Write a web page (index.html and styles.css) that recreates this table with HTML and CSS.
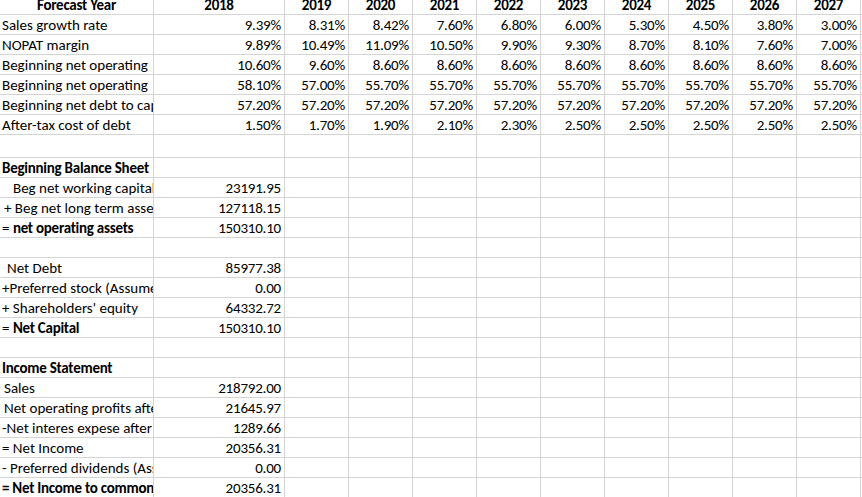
FILE: index.html
```html
<!DOCTYPE html>
<html>
<head>
<meta charset="utf-8">
<link rel="stylesheet" href="styles.css">
</head>
<body>
<div class="sheet">
  <div class="row head">
    <div class="c b ctr">Forecast Year</div><div class="c b ctr">2018</div><div class="c b ctr">2019</div><div class="c b ctr">2020</div><div class="c b ctr">2021</div><div class="c b ctr">2022</div><div class="c b ctr">2023</div><div class="c b ctr">2024</div><div class="c b ctr">2025</div><div class="c b ctr">2026</div><div class="c b ctr">2027</div><div class="c"></div>
  </div>
  <div class="row">
    <div class="c">Sales growth rate</div><div class="c n">9.39%</div><div class="c n">8.31%</div><div class="c n">8.42%</div><div class="c n">7.60%</div><div class="c n">6.80%</div><div class="c n">6.00%</div><div class="c n">5.30%</div><div class="c n">4.50%</div><div class="c n">3.80%</div><div class="c n">3.00%</div><div class="c"></div>
  </div>
  <div class="row">
    <div class="c">NOPAT margin</div><div class="c n">9.89%</div><div class="c n">10.49%</div><div class="c n">11.09%</div><div class="c n">10.50%</div><div class="c n">9.90%</div><div class="c n">9.30%</div><div class="c n">8.70%</div><div class="c n">8.10%</div><div class="c n">7.60%</div><div class="c n">7.00%</div><div class="c"></div>
  </div>
  <div class="row">
    <div class="c">Beginning net operating &nbsp;working capital</div><div class="c n">10.60%</div><div class="c n">9.60%</div><div class="c n">8.60%</div><div class="c n">8.60%</div><div class="c n">8.60%</div><div class="c n">8.60%</div><div class="c n">8.60%</div><div class="c n">8.60%</div><div class="c n">8.60%</div><div class="c n">8.60%</div><div class="c"></div>
  </div>
  <div class="row">
    <div class="c">Beginning net operating &nbsp;long-term assets</div><div class="c n">58.10%</div><div class="c n">57.00%</div><div class="c n">55.70%</div><div class="c n">55.70%</div><div class="c n">55.70%</div><div class="c n">55.70%</div><div class="c n">55.70%</div><div class="c n">55.70%</div><div class="c n">55.70%</div><div class="c n">55.70%</div><div class="c"></div>
  </div>
  <div class="row">
    <div class="c">Beginning net debt to capital</div><div class="c n">57.20%</div><div class="c n">57.20%</div><div class="c n">57.20%</div><div class="c n">57.20%</div><div class="c n">57.20%</div><div class="c n">57.20%</div><div class="c n">57.20%</div><div class="c n">57.20%</div><div class="c n">57.20%</div><div class="c n">57.20%</div><div class="c"></div>
  </div>
  <div class="row">
    <div class="c">After-tax cost of debt</div><div class="c n">1.50%</div><div class="c n">1.70%</div><div class="c n">1.90%</div><div class="c n">2.10%</div><div class="c n">2.30%</div><div class="c n">2.50%</div><div class="c n">2.50%</div><div class="c n">2.50%</div><div class="c n">2.50%</div><div class="c n">2.50%</div><div class="c"></div>
  </div>
  <div class="row tall">
    <div class="c"></div><div class="c"></div><div class="c"></div><div class="c"></div><div class="c"></div><div class="c"></div><div class="c"></div><div class="c"></div><div class="c"></div><div class="c"></div><div class="c"></div><div class="c"></div>
  </div>
  <div class="row">
    <div class="c b">Beginning Balance Sheet</div><div class="c"></div><div class="c"></div><div class="c"></div><div class="c"></div><div class="c"></div><div class="c"></div><div class="c"></div><div class="c"></div><div class="c"></div><div class="c"></div><div class="c"></div>
  </div>
  <div class="row">
    <div class="c ind3">Beg net working capital</div><div class="c n">23191.95</div><div class="c"></div><div class="c"></div><div class="c"></div><div class="c"></div><div class="c"></div><div class="c"></div><div class="c"></div><div class="c"></div><div class="c"></div><div class="c"></div>
  </div>
  <div class="row">
    <div class="c ind1">+ Beg net long term assets</div><div class="c n">127118.15</div><div class="c"></div><div class="c"></div><div class="c"></div><div class="c"></div><div class="c"></div><div class="c"></div><div class="c"></div><div class="c"></div><div class="c"></div><div class="c"></div>
  </div>
  <div class="row">
    <div class="c"><span>= <b>net operating assets</b></span></div><div class="c n">150310.10</div><div class="c"></div><div class="c"></div><div class="c"></div><div class="c"></div><div class="c"></div><div class="c"></div><div class="c"></div><div class="c"></div><div class="c"></div><div class="c"></div>
  </div>
  <div class="row">
    <div class="c"></div><div class="c"></div><div class="c"></div><div class="c"></div><div class="c"></div><div class="c"></div><div class="c"></div><div class="c"></div><div class="c"></div><div class="c"></div><div class="c"></div><div class="c"></div>
  </div>
  <div class="row">
    <div class="c ind2">Net Debt</div><div class="c n">85977.38</div><div class="c"></div><div class="c"></div><div class="c"></div><div class="c"></div><div class="c"></div><div class="c"></div><div class="c"></div><div class="c"></div><div class="c"></div><div class="c"></div>
  </div>
  <div class="row">
    <div class="c">+Preferred stock (Assumed)</div><div class="c n">0.00</div><div class="c"></div><div class="c"></div><div class="c"></div><div class="c"></div><div class="c"></div><div class="c"></div><div class="c"></div><div class="c"></div><div class="c"></div><div class="c"></div>
  </div>
  <div class="row">
    <div class="c">+ Shareholders' equity</div><div class="c n">64332.72</div><div class="c"></div><div class="c"></div><div class="c"></div><div class="c"></div><div class="c"></div><div class="c"></div><div class="c"></div><div class="c"></div><div class="c"></div><div class="c"></div>
  </div>
  <div class="row">
    <div class="c"><span>= <b>Net Capital</b></span></div><div class="c n">150310.10</div><div class="c"></div><div class="c"></div><div class="c"></div><div class="c"></div><div class="c"></div><div class="c"></div><div class="c"></div><div class="c"></div><div class="c"></div><div class="c"></div>
  </div>
  <div class="row">
    <div class="c"></div><div class="c"></div><div class="c"></div><div class="c"></div><div class="c"></div><div class="c"></div><div class="c"></div><div class="c"></div><div class="c"></div><div class="c"></div><div class="c"></div><div class="c"></div>
  </div>
  <div class="row">
    <div class="c b">Income Statement</div><div class="c"></div><div class="c"></div><div class="c"></div><div class="c"></div><div class="c"></div><div class="c"></div><div class="c"></div><div class="c"></div><div class="c"></div><div class="c"></div><div class="c"></div>
  </div>
  <div class="row">
    <div class="c ind1">Sales</div><div class="c n">218792.00</div><div class="c"></div><div class="c"></div><div class="c"></div><div class="c"></div><div class="c"></div><div class="c"></div><div class="c"></div><div class="c"></div><div class="c"></div><div class="c"></div>
  </div>
  <div class="row">
    <div class="c ind1">Net operating profits after tax</div><div class="c n">21645.97</div><div class="c"></div><div class="c"></div><div class="c"></div><div class="c"></div><div class="c"></div><div class="c"></div><div class="c"></div><div class="c"></div><div class="c"></div><div class="c"></div>
  </div>
  <div class="row">
    <div class="c">-Net interes expese after tax</div><div class="c n">1289.66</div><div class="c"></div><div class="c"></div><div class="c"></div><div class="c"></div><div class="c"></div><div class="c"></div><div class="c"></div><div class="c"></div><div class="c"></div><div class="c"></div>
  </div>
  <div class="row">
    <div class="c">= Net Income</div><div class="c n">20356.31</div><div class="c"></div><div class="c"></div><div class="c"></div><div class="c"></div><div class="c"></div><div class="c"></div><div class="c"></div><div class="c"></div><div class="c"></div><div class="c"></div>
  </div>
  <div class="row">
    <div class="c">- Preferred dividends (Assumed)</div><div class="c n">0.00</div><div class="c"></div><div class="c"></div><div class="c"></div><div class="c"></div><div class="c"></div><div class="c"></div><div class="c"></div><div class="c"></div><div class="c"></div><div class="c"></div>
  </div>
  <div class="row">
    <div class="c b">= Net Income to common</div><div class="c n">20356.31</div><div class="c"></div><div class="c"></div><div class="c"></div><div class="c"></div><div class="c"></div><div class="c"></div><div class="c"></div><div class="c"></div><div class="c"></div><div class="c"></div>
  </div>
</div>
</body>
</html>
```
FILE: styles.css
```css
html, body {
  margin: 0;
  padding: 0;
  background: #ffffff;
}
body {
  width: 862px;
  height: 497px;
  overflow: hidden;
  font-family: Carlito, Calibri, Lato, "Liberation Sans", sans-serif;
  font-size: 15px;
  color: #000000;
}
.sheet {
  display: flex;
  flex-direction: column;
  width: 940px;
}
.row {
  display: grid;
  grid-template-columns: 154px 131px repeat(10, 64px) 64px;
  height: 20px;
}
.row.head {
  height: 15px;
}
.row.tall {
  height: 23px;
}
.c {
  box-sizing: border-box;
  border-right: 1px solid #d4d4d4;
  border-bottom: 1px solid #d4d4d4;
  padding: 0 2px 0 2px;
  overflow: hidden;
  white-space: nowrap;
  line-height: 18px;
  display: flex;
  align-items: flex-end;
}
.b, .c b {
  font-weight: 700;
  letter-spacing: -0.25px;
}
.ctr {
  justify-content: center;
}
.n {
  justify-content: flex-end;
  padding-right: 3px;
  letter-spacing: -0.2px;
}
.ind1 { padding-left: 4px; }
.ind2 { padding-left: 7px; }
.ind3 { padding-left: 13px; }
```
